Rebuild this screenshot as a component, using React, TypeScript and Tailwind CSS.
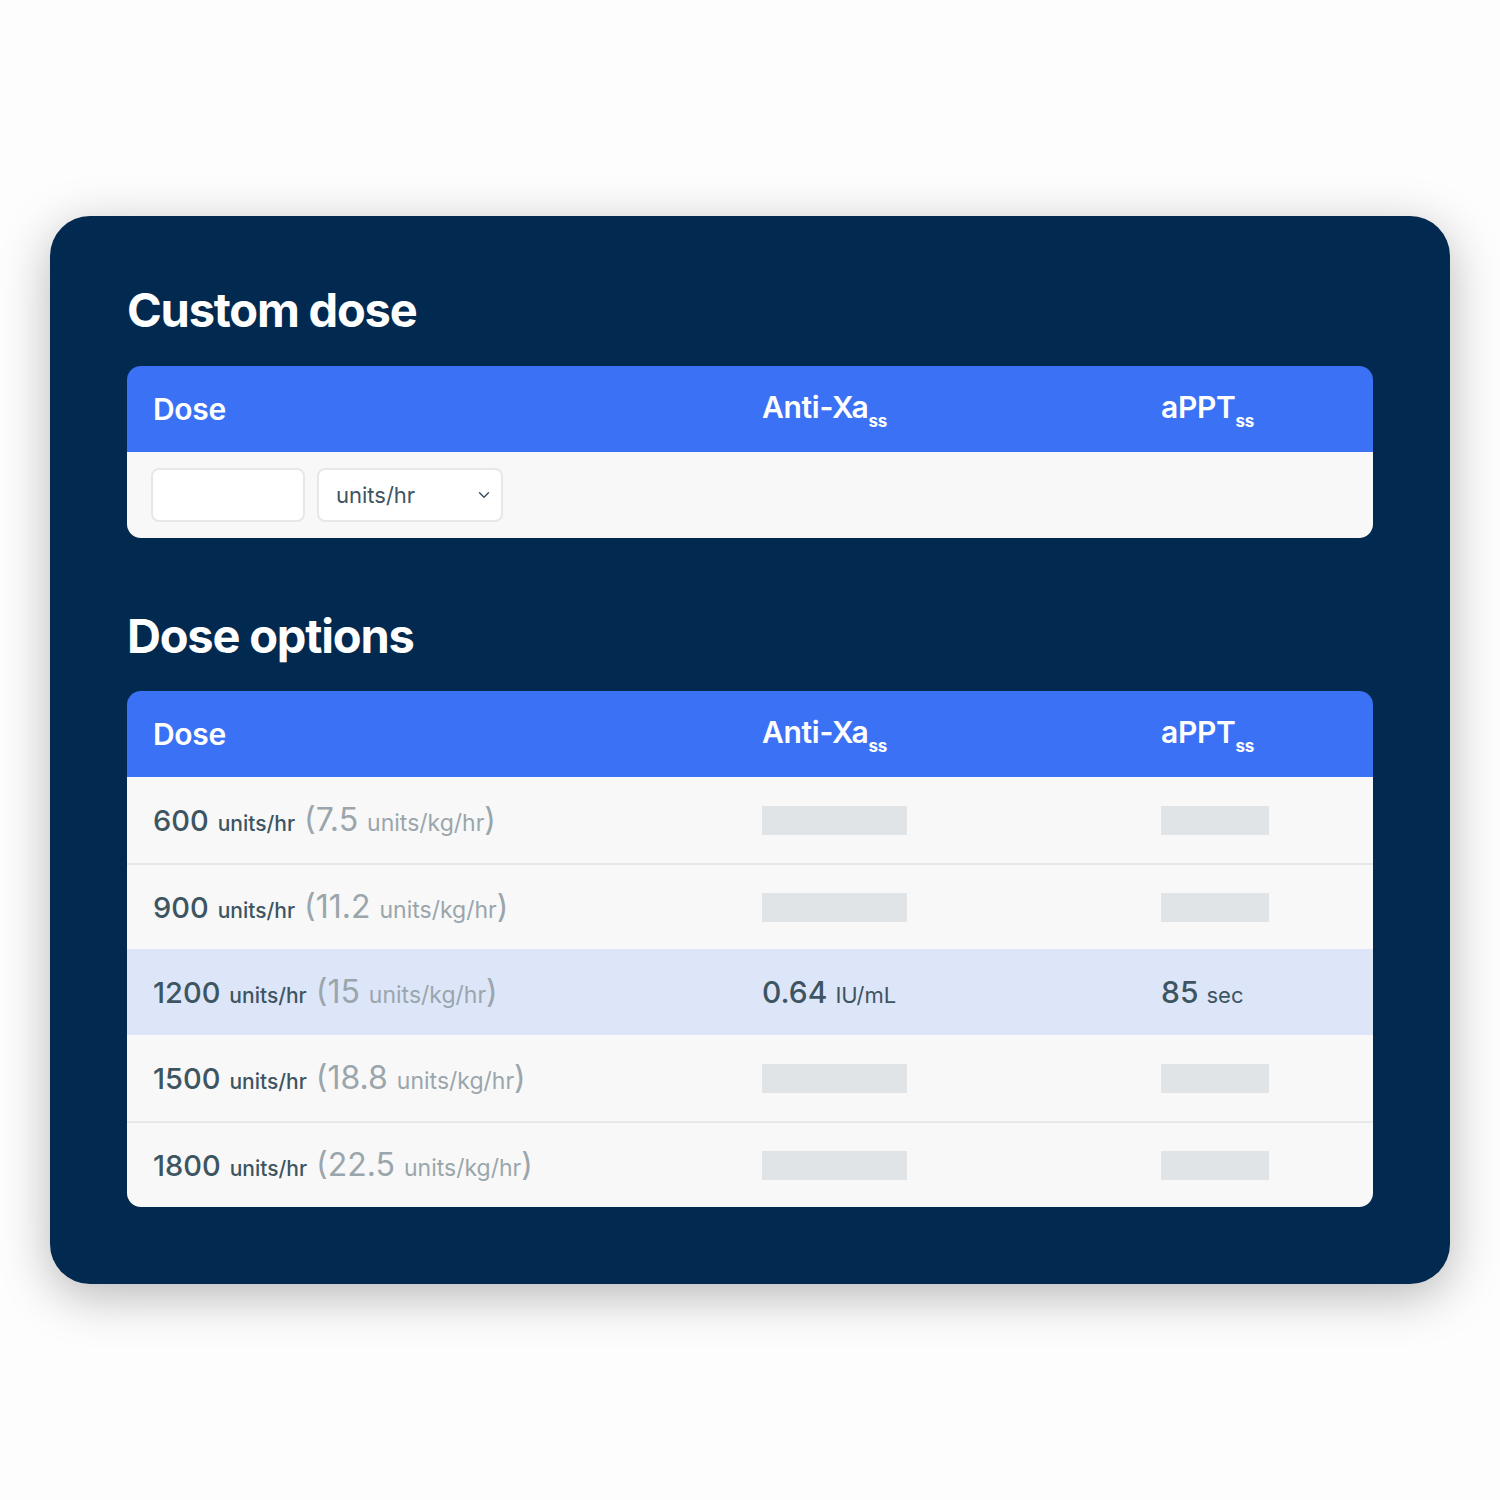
import { ChevronDown } from 'lucide-react'

type Row = {
  dose: string
  perKg: string
  xa?: string
  aptt?: string
}

const rows: Row[] = [
  { dose: '600', perKg: '7.5' },
  { dose: '900', perKg: '11.2' },
  { dose: '1200', perKg: '15', xa: '0.64', aptt: '85' },
  { dose: '1500', perKg: '18.8' },
  { dose: '1800', perKg: '22.5' },
]

const cols = 'grid grid-cols-[609px_399px_1fr]'

function Header() {
  return (
    <div className={`${cols} h-[86px] items-center bg-[#3b72f5] text-white font-semibold text-[30px] leading-none tracking-[-0.3px]`}>
      <div className="pl-[26px]">Dose</div>
      <div className="pl-[26px]">
        Anti-Xa<sub className="text-[17px] font-bold align-[-5px] leading-none">ss</sub>
      </div>
      <div className="pl-[26px]">
        aPPT<sub className="text-[17px] font-bold align-[-5px] leading-none">ss</sub>
      </div>
    </div>
  )
}

export default function App() {
  return (
    <div
      className="min-h-[1500px] bg-[#fdfdfd] px-[50px] pt-[216px]"
      style={{ fontFamily: 'Inter, "Noto Sans", sans-serif' }}
    >
      <div className="bg-[#02294f] rounded-[40px] shadow-[0_12px_50px_rgba(0,0,0,0.28)] px-[77px] pt-[70px] pb-[77px]">

        {/* custom dose */}
        <h1 className="text-white font-bold text-[47px] leading-[48px] tracking-[-1.2px]">Custom dose</h1>
        <div className="mt-[32px] rounded-[14px] overflow-hidden">
          <Header />
          <div className="h-[86px] bg-[#f8f8f8] flex items-center gap-[12px] pl-[24px]">
            <div className="w-[154px] h-[54px] bg-white border-2 border-[#e6e7e8] rounded-[8px]" />
            <div className="w-[186px] h-[54px] bg-white border-2 border-[#e6e7e8] rounded-[8px] flex items-center justify-between pl-[17px] pr-[8px] text-[22px] text-[#3d5561]">
              <span>units/hr</span>
              <ChevronDown size={18} strokeWidth={2} className="text-[#3d5561]" />
            </div>
          </div>
        </div>

        {/* dose options */}
        <h1 className="mt-[74px] text-white font-bold text-[47px] leading-[48px] tracking-[-1.2px]">Dose options</h1>
        <div className="mt-[31px] rounded-[14px] overflow-hidden">
          <Header />
          {rows.map((r, i) => {
            const hl = !!r.xa
            const prevHl = i > 0 && !!rows[i - 1].xa
            const line = i > 0 && !hl && !prevHl
            return (
              <div
                key={r.dose}
                className={`${cols} h-[86px] items-center ${hl ? 'bg-[#dde5f9]' : 'bg-[#f8f8f8]'} ${line ? 'border-t-2 border-[#e6e8e9]' : ''}`}
              >
                <div className="pl-[26px] text-[#3d5561] whitespace-nowrap">
                  <span className="text-[29px] font-medium">{r.dose}</span>
                  <span className="text-[21px] font-medium ml-[9px]">units/hr</span>
                  <span className="text-[#9aa6ab] ml-[9px]">
                    <span className="text-[32px]">(</span>
                    <span className="text-[32px]">{r.perKg}</span>
                    <span className="text-[23px] ml-[9px]">units/kg/hr</span>
                    <span className="text-[32px]">)</span>
                  </span>
                </div>
                <div className="pl-[26px]">
                  {hl ? (
                    <span className="text-[#3d5561]">
                      <span className="text-[30px] font-medium">{r.xa}</span>
                      <span className="text-[22px] ml-[8px]">IU/mL</span>
                    </span>
                  ) : (
                    <div className="w-[145px] h-[29px] bg-[#e1e4e7]" />
                  )}
                </div>
                <div className="pl-[26px]">
                  {hl ? (
                    <span className="text-[#3d5561]">
                      <span className="text-[30px] font-medium">{r.aptt}</span>
                      <span className="text-[22px] ml-[8px]">sec</span>
                    </span>
                  ) : (
                    <div className="w-[108px] h-[29px] bg-[#e1e4e7]" />
                  )}
                </div>
              </div>
            )
          })}
        </div>
      </div>
    </div>
  )
}
